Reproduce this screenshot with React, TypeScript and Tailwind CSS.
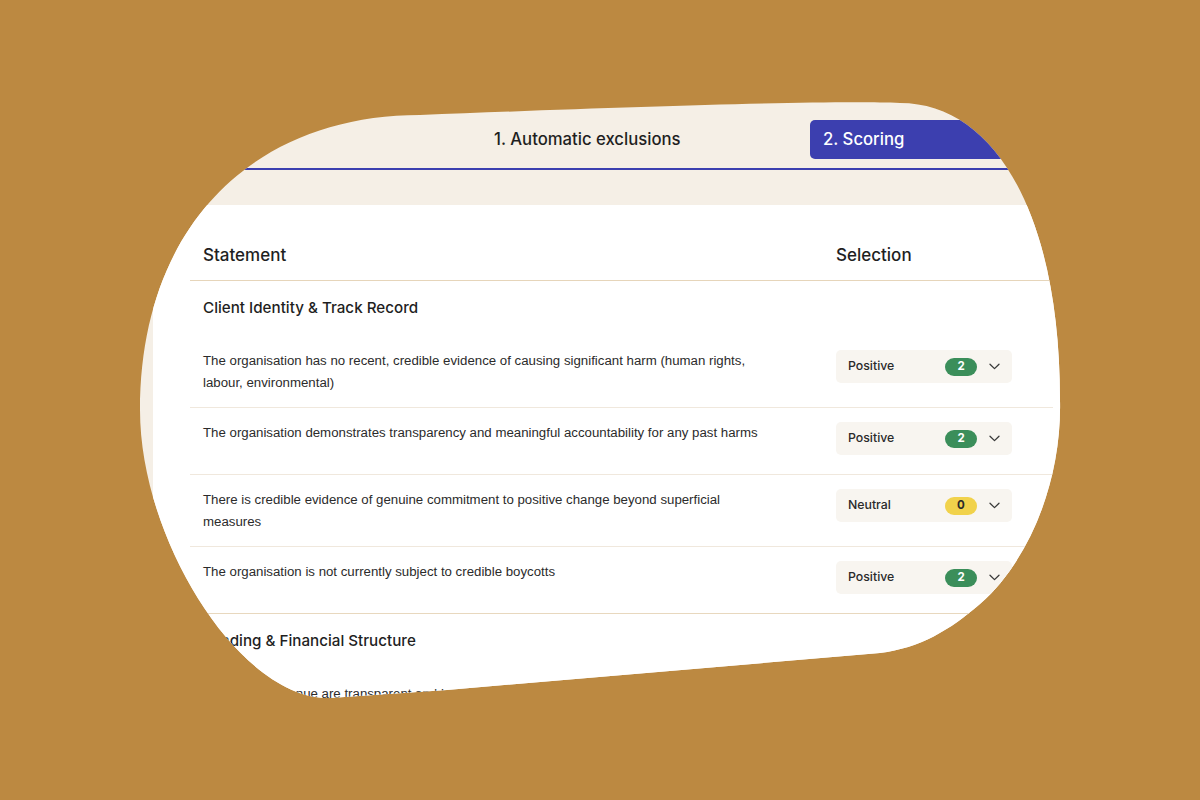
import React from "react";

type Row = { text: string; label: string; score: number; tone: "green" | "yellow" };

const section1: Row[] = [
  {
    text: "The organisation has no recent, credible evidence of causing significant harm (human rights, labour, environmental)",
    label: "Positive",
    score: 2,
    tone: "green",
  },
  {
    text: "The organisation demonstrates transparency and meaningful accountability for any past harms",
    label: "Positive",
    score: 2,
    tone: "green",
  },
  {
    text: "There is credible evidence of genuine commitment to positive change beyond superficial measures",
    label: "Neutral",
    score: 0,
    tone: "yellow",
  },
  {
    text: "The organisation is not currently subject to credible boycotts",
    label: "Positive",
    score: 2,
    tone: "green",
  },
];

function Chevron() {
  return (
    <svg width="11" height="7" viewBox="0 0 11 7" fill="none">
      <path d="M1 1.2 L5.5 5.6 L10 1.2" stroke="#3a3a3a" strokeWidth="1.3" strokeLinecap="round" strokeLinejoin="round" />
    </svg>
  );
}

function Select({ label, score, tone }: { label: string; score: number; tone: "green" | "yellow" }) {
  return (
    <div className="w-[176px] h-[33px] mb-[6px] shrink-0 rounded-[5px] bg-[#F8F5F0] flex items-center pl-[12px] pr-[12px]">
      <span className="flex-1 font-['Inter',sans-serif] text-[12.3px] font-medium text-[#2a2a2a]">{label}</span>
      <span
        className={
          tone === "green"
            ? "w-[32px] h-[18px] rounded-full bg-[#3B8E5A] text-white flex items-center justify-center font-['Inter',sans-serif] text-[11.5px] font-bold"
            : "w-[32px] h-[18px] rounded-full bg-[#F1D24B] text-[#2a2a2a] flex items-center justify-center font-['Inter',sans-serif] text-[11.5px] font-bold"
        }
      >
        {score}
      </span>
      <span className="ml-[12px] flex items-center">
        <Chevron />
      </span>
    </div>
  );
}

function StatementRow({ row, last }: { row: Row; last?: boolean }) {
  return (
    <div
      className={
        last
          ? "flex items-start pt-[14px] pb-[13px] border-b border-[#E8D8BE]"
          : "flex items-start pt-[14px] pb-[13px] border-b border-[#F0E8DD]"
      }
    >
      <div className="w-[646px] shrink-0 pl-[13px] pr-[60px]">
        <p className="font-['Liberation_Sans',Arial,sans-serif] text-[13.25px] leading-[22px] text-[#2b2b2b]">{row.text}</p>
      </div>
      <Select label={row.label} score={row.score} tone={row.tone} />
    </div>
  );
}

export default function App() {
  return (
    <div className="w-[1200px] h-[800px] bg-[#BC8941] overflow-hidden">
      <div className="w-[1200px] h-[800px] bg-[#F5EFE6] flex flex-col [clip-path:path('M140_410_C140_225_255_115_420_115_C600_108_820_100_900_103_C995_103_1060_215_1060_400_C1062_480_1030_560_980_604_C950_630_920_648_880_653_L447_690_L330_698_C240_700_140_540_140_410_Z')]">
        {/* Tabs */}
        <div className="pt-[120px] flex pl-[481px] font-['Inter',sans-serif] text-[16.7px] font-medium">
          <div className="w-[329px] shrink-0 h-[39px] flex items-center px-[13px] text-[#1f1f1f]">1. Automatic exclusions</div>
          <div className="w-[420px] shrink-0 h-[39px] flex items-center px-[13px] rounded-[5px] bg-[#3C3FAF] text-white">2. Scoring</div>
        </div>
        <div className="mt-[9px] h-[2px] bg-[#3C3FAF]" />
        <div className="h-[35px]" />

        {/* Body */}
        <div className="flex flex-1">
          <div className="w-[153px] shrink-0" />
          <div className="flex-1 bg-white pl-[37px]">
            <div className="w-[863px]">
              <div className="h-[76px] flex items-end pb-[14px] border-b border-[#E6D5BA] font-['Inter',sans-serif] text-[17px] font-medium text-[#1f1f1f] leading-[22px]">
                <div className="w-[646px] shrink-0 pl-[13px]">Statement</div>
                <div>Selection</div>
              </div>

              <div className="h-[55px] flex items-center pl-[13px] font-['Inter',sans-serif] text-[15.2px] font-medium text-[#1f1f1f]">
                Client Identity &amp; Track Record
              </div>
              {section1.map((r, i) => (
                <StatementRow key={i} row={r} last={i === section1.length - 1} />
              ))}

              <div className="h-[55px] flex items-center pl-[13px] font-['Inter',sans-serif] text-[15.2px] font-medium text-[#1f1f1f]">
                Funding &amp; Financial Structure
              </div>
              <StatementRow
                row={{
                  text: "Sources of revenue are transparent and legitimate",
                  label: "Positive",
                  score: 2,
                  tone: "green",
                }}
              />
            </div>
          </div>
        </div>
      </div>
    </div>
  );
}
